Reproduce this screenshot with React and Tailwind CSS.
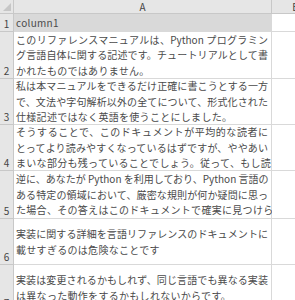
import React from 'react';

const rows = [
  { n: 1, h: 'h-[18px]', head: true, lines: ['column1'] },
  {
    n: 2,
    h: 'h-[47px]',
    lines: [
      'このリファレンスマニュアルは、Python プログラミン',
      'グ言語自体に関する記述です。チュートリアルとして書',
      'かれたものではありません。',
    ],
  },
  {
    n: 3,
    h: 'h-[46px]',
    lines: [
      '私は本マニュアルをできるだけ正確に書こうとする一方',
      'で、文法や字句解析以外の全てについて、形式化された',
      '仕様記述ではなく英語を使うことにしました。',
    ],
  },
  {
    n: 4,
    h: 'h-[46px]',
    lines: [
      'そうすることで、このドキュメントが平均的な読者に',
      'とってより読みやすくなっているはずですが、ややあい',
      'まいな部分も残っていることでしょう。従って、もし読',
    ],
  },
  {
    n: 5,
    h: 'h-[48px]',
    lines: [
      '逆に、あなたが Python を利用しており、Python 言語の',
      'ある特定の領域において、厳密な規則が何か疑問に思っ',
      'た場合、その答えはこのドキュメントで確実に見つけら',
    ],
  },
  {
    n: 6,
    h: 'h-[46px]',
    lines: ['実装に関する詳細を言語リファレンスのドキュメントに', '載せすぎるのは危険なことです'],
  },
  {
    n: 7,
    h: 'h-[46px]',
    lines: ['実装は変更されるかもしれず、同じ言語でも異なる実装', 'は異なった動作をするかもしれないからです。'],
  },
];

const font = { fontFamily: '"Noto Sans CJK JP", "Noto Sans", sans-serif' };

export default function App() {
  return (
    <div className="w-[295px] h-[300px] overflow-hidden bg-white" style={font}>
      <div className="grid grid-cols-[14px_258px_48px] w-[320px]">
        {/* column headers */}
        <div className="h-[14px] bg-[#e6e6e6] border-r border-b border-[#c8c8c8] flex items-end justify-end p-[2px]">
          <svg width="8" height="8" viewBox="0 0 8 8">
            <polygon points="8,0 8,8 0,8" fill="#c6c6c6" />
          </svg>
        </div>
        <div className="h-[14px] bg-[#e6e6e6] border-r border-b border-[#c8c8c8] flex items-center justify-center text-[10px] leading-none text-[#444]">
          A
        </div>
        <div className="h-[14px] bg-[#e6e6e6] border-r border-b border-[#c8c8c8] flex items-center justify-center text-[10px] leading-none text-[#444]">
          B
        </div>

        {rows.map((r) => (
          <React.Fragment key={r.n}>
            <div
              className={`${r.h} bg-[#e6e6e6] border-r border-b border-[#c8c8c8] flex items-end justify-center pb-[2px] text-[10px] leading-none text-[#444]`}
            >
              {r.n}
            </div>
            <div
              className={`${r.h} border-r border-b border-[#d9d9d9] flex flex-col justify-center pl-[2px] pr-[3px] text-[10px] leading-[15.5px] text-[#4a4a4a] ${
                r.head ? 'bg-[#d9d9d9]' : 'bg-white'
              }`}
            >
              {r.lines.map((l, i) => (
                <div
                  key={i}
                  className={`whitespace-nowrap ${
                    i < r.lines.length - 1 ? 'text-justify [text-align-last:justify]' : 'tracking-[0.3px]'
                  }`}
                >
                  {l}
                </div>
              ))}
            </div>
            <div className={`${r.h} border-r border-b border-[#d9d9d9] bg-white`} />
          </React.Fragment>
        ))}
      </div>
    </div>
  );
}
